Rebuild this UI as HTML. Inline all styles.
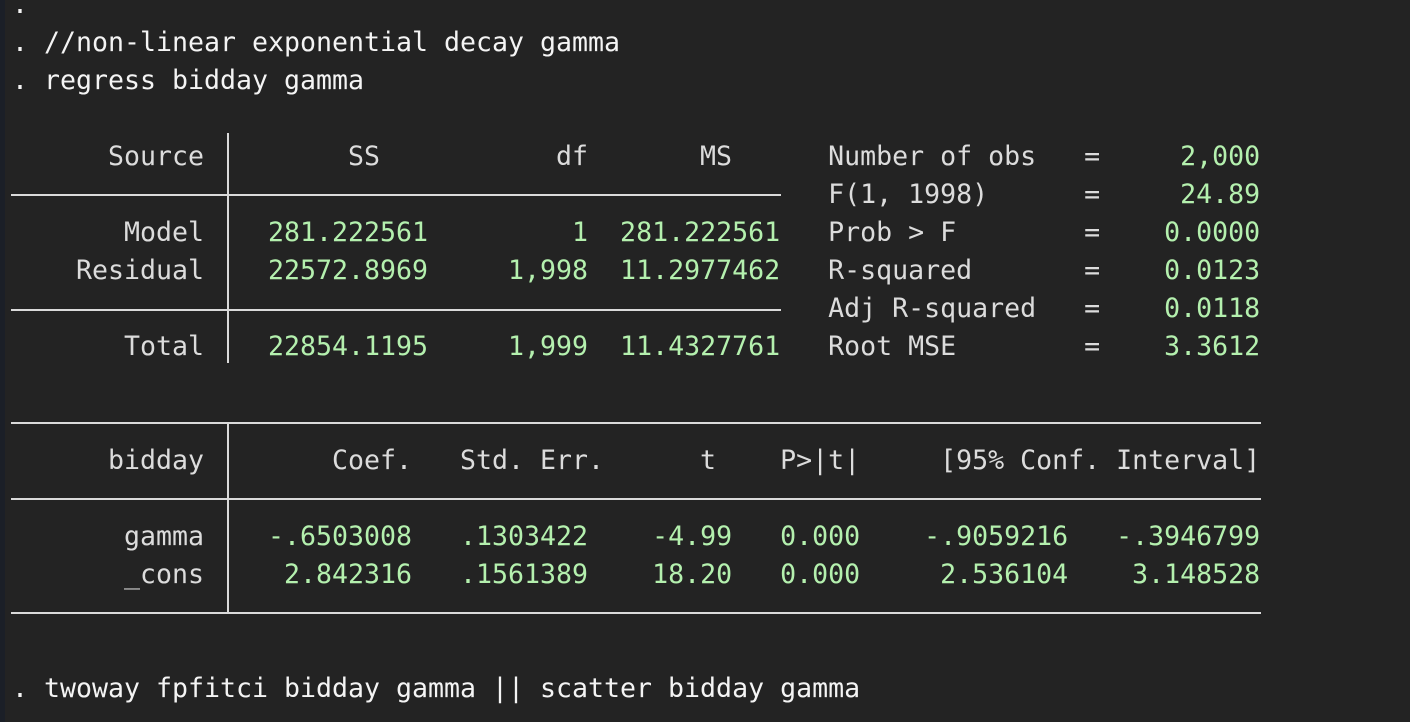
<!DOCTYPE html>
<html><head><meta charset="utf-8"><style>
html,body{margin:0;padding:0;}
body{width:1410px;height:722px;background:#232323;position:relative;overflow:hidden;}
.strip{position:absolute;left:0;top:0;width:5px;height:722px;background:#1b1f27;}
pre{position:absolute;left:12px;top:-14px;margin:0;font-family:"DejaVu Sans Mono","Liberation Mono",monospace;font-size:26.58px;line-height:38px;color:#dcdcdc;white-space:pre;}
.c{color:#f4f4f4;}
.g{color:#b4f0ae;}
.h{position:absolute;height:2px;background:#dadada;}
.v{position:absolute;width:2px;background:#dadada;}
</style></head><body>
<div class="strip"></div>
<pre><span class="c">.</span>
<span class="c">. //non-linear exponential decay gamma</span>
<span class="c">. regress bidday gamma</span>

      Source         SS           df       MS      Number of obs   =     <span class="g">2,000</span>
                                                   F(1, 1998)      =     <span class="g">24.89</span>
       Model    <span class="g">281.222561         1  281.222561</span>   Prob &gt; F        =    <span class="g">0.0000</span>
    Residual    <span class="g">22572.8969     1,998  11.2977462</span>   R-squared       =    <span class="g">0.0123</span>
                                                   Adj R-squared   =    <span class="g">0.0118</span>
       Total    <span class="g">22854.1195     1,999  11.4327761</span>   Root MSE        =    <span class="g">3.3612</span>


      bidday        Coef.   Std. Err.      t    P&gt;|t|     [95% Conf. Interval]

       gamma    <span class="g">-.6503008   .1303422    -4.99   0.000    -.9059216   -.3946799</span>
       _cons    <span class="g"> 2.842316   .1561389    18.20   0.000     2.536104    3.148528</span>


<span class="c">. twoway fpfitci bidday gamma || scatter bidday gamma</span></pre>
<div class="h" style="left:11px;top:194px;width:770px;"></div>
<div class="h" style="left:11px;top:309px;width:770px;"></div>
<div class="v" style="left:227px;top:133px;height:230px;"></div>
<div class="h" style="left:11px;top:422px;width:1250px;"></div>
<div class="h" style="left:11px;top:498px;width:1250px;"></div>
<div class="h" style="left:11px;top:612px;width:1250px;"></div>
<div class="v" style="left:227px;top:423px;height:190px;"></div>
</body></html>
